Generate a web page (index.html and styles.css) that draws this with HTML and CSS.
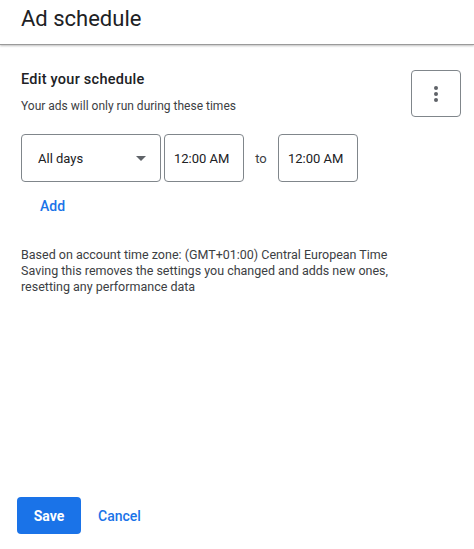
FILE: index.html
```html
<!DOCTYPE html>
<html lang="en">
<head>
<meta charset="utf-8">
<title>Ad schedule</title>
<link rel="stylesheet" href="styles.css">
</head>
<body>
<div class="page">
  <header class="header">
    <h1 class="title">Ad schedule</h1>
  </header>
  <main class="content">
    <div class="intro">
      <div class="intro-text">
        <h2 class="heading">Edit your schedule</h2>
        <p class="sub">Your ads will only run during these times</p>
      </div>
      <button class="kebab" aria-label="More options">
        <svg width="4" height="16" viewBox="0 0 4 16"><circle cx="2" cy="2" r="2"/><circle cx="2" cy="8" r="2"/><circle cx="2" cy="14" r="2"/></svg>
      </button>
    </div>
    <div class="row">
      <div class="field select">
        <span>All days</span>
        <svg class="caret" width="10" height="5" viewBox="0 0 10 5"><path d="M0 0h10L5 5z"/></svg>
      </div>
      <div class="field time">12:00 AM</div>
      <span class="to">to</span>
      <div class="field time">12:00 AM</div>
    </div>
    <div class="add">Add</div>
    <p class="note">Based on account time zone: (GMT+01:00) Central European Time<br>Saving this removes the settings you changed and adds new ones, resetting any performance data</p>
  </main>
  <footer class="footer">
    <button class="save">Save</button>
    <button class="cancel">Cancel</button>
  </footer>
</div>
</body>
</html>
```

FILE: styles.css
```css
* { box-sizing: border-box; }
html, body { margin: 0; padding: 0; background: #fff; }
body { font-family: Roboto, "Noto Sans", Arial, sans-serif; color: #3c4043; }
.page { display: flex; flex-direction: column; min-height: 549px; }
.header {
  height: 45px;
  border-bottom: 1px solid #9a9a9a;
  box-shadow: 0 1px 2px rgba(0,0,0,0.25);
  padding-left: 21px;
}
.title {
  margin: 1px 0 0;
  font-weight: 400;
  font-size: 22px;
  line-height: 36px;
  color: #202124;
}
.content { padding: 25px 13px 0 21px; }
.intro { display: flex; justify-content: space-between; align-items: flex-start; }
.heading {
  margin: 0;
  font-size: 14.5px;
  font-weight: 500;
  line-height: 20px;
  color: #202124;
  letter-spacing: 0.25px;
}
.sub { margin: 8px 0 0; font-size: 12px; line-height: 16px; color: #3c4043; }
.kebab {
  width: 50px; height: 47px;
  border: 1px solid #80868b; border-radius: 4px;
  background: #fff; padding: 0;
  display: flex; align-items: center; justify-content: center;
  fill: #5f6368;
}
.row { display: flex; align-items: center; margin-top: 17px; }
.field {
  height: 48px;
  border: 1px solid #80868b; border-radius: 4px;
  display: flex; align-items: center;
  font-size: 13px; color: #202124;
}
.select { width: 140px; padding: 0 14px 0 16px; justify-content: space-between; margin-right: 3px; }
.caret { fill: #5f6368; }
.time { width: 80px; padding-left: 9px; }
.to { width: 34px; text-align: center; font-size: 13px; color: #3c4043; }
.add {
  margin: 15px 0 0 19px;
  font-size: 14px; font-weight: 500; line-height: 18px;
  color: #1a73e8;
}
.note { margin: 32px 0 0; max-width: 390px; font-size: 12.5px; line-height: 16px; color: #3c4043; }
.footer { margin-top: auto; padding: 0 0 15px 17px; display: flex; align-items: center; }
.save {
  width: 64px; height: 37px;
  background: #1a73e8; color: #fff; border: none; border-radius: 4px;
  font-family: inherit; font-size: 14px; font-weight: 700;
}
.cancel {
  margin-left: 17px; background: none; border: none; padding: 0;
  font-family: inherit; font-size: 14px; font-weight: 500; color: #1a73e8;
}
```
